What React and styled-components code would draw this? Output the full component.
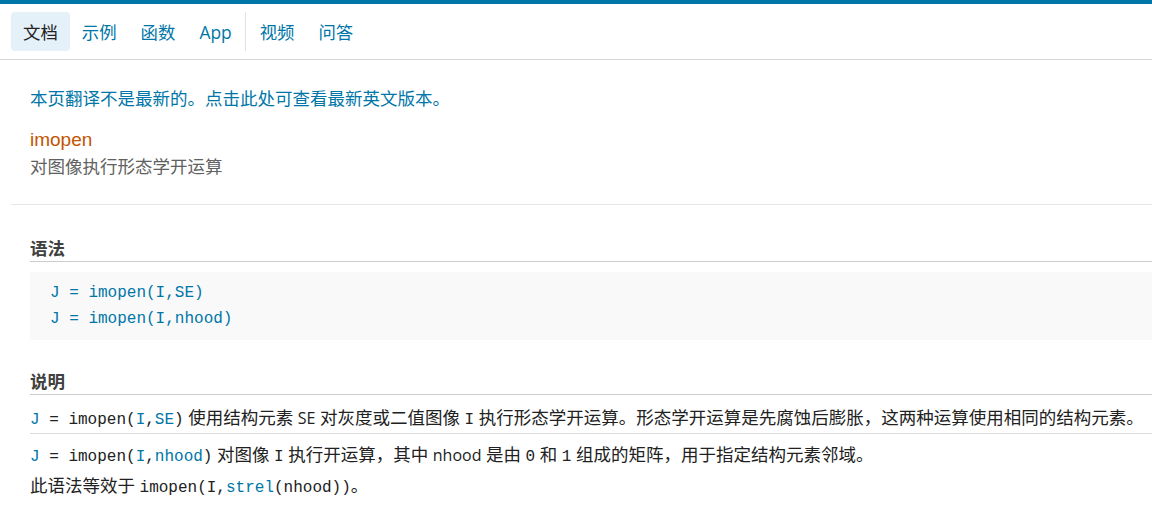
import React from "react";
import styled, { createGlobalStyle } from "styled-components";

const GlobalStyle = createGlobalStyle`
  html, body { margin: 0; padding: 0; background: #fff; }
  body {
    font-family: "Open Sans", "Noto Sans CJK SC", sans-serif;
    color: #212121;
    -webkit-font-smoothing: antialiased;
  }
`;

const BLUE = "#0076a8";
const MONO = `"Liberation Mono", "Noto Sans CJK SC", monospace`;
const BODY = `"Open Sans", "Noto Sans CJK SC", sans-serif`;

const TopBar = styled.div`
  height: 4px;
  background: ${BLUE};
`;

const Nav = styled.nav`
  display: flex;
  align-items: center;
  padding: 8px 11px;
  border-bottom: 1px solid #d6d6d6;
`;

const Tab = styled.a`
  display: block;
  height: 39px;
  line-height: 41px;
  padding: 0 12px;
  border-radius: 4px;
  font-family: ${BODY};
  font-size: 17.4px;
  text-decoration: none;
  cursor: pointer;
  color: ${(p) => (p.$active ? "#212121" : BLUE)};
  background: ${(p) => (p.$active ? "#e5f1f9" : "transparent")};
`;

const NavDivider = styled.span`
  width: 1px;
  height: 39px;
  background: #e2e2e2;
  margin: 0 2px 0 1px;
`;

const Main = styled.main`
  padding-left: 11px;
`;

const Header = styled.header`
  padding: 25px 19px 25px;
  border-bottom: 1px solid #e6e6e6;
`;

const Notice = styled.a`
  display: block;
  font-family: ${BODY};
  font-size: 17.5px;
  line-height: 26px;
  color: ${BLUE};
  text-decoration: none;
`;

const Title = styled.h1`
  margin: 16px 0 0;
  font-family: "Liberation Sans", Arial, sans-serif;
  font-weight: normal;
  font-size: 19px;
  line-height: 26px;
  color: #c45400;
`;

const Subtitle = styled.div`
  font-family: ${BODY};
  font-size: 17.5px;
  line-height: 26px;
  color: #616161;
`;

const Section = styled.section`
  margin: ${(p) => p.$top}px 0 0 19px;
`;

const SectionHeading = styled.h2`
  margin: 0;
  font-family: ${BODY};
  font-weight: bold;
  font-size: 17.5px;
  line-height: 26px;
  color: #404040;
  border-bottom: 1px solid #cccccc;
`;

const CodeBlock = styled.div`
  margin-top: 10px;
  padding: 8px 20px;
  background: #f9f9f9;
`;

const CodeLine = styled.div`
  font-family: ${MONO};
  font-size: 16px;
  line-height: 26px;
  color: ${BLUE};
  white-space: pre;
`;

const DescRow = styled.div`
  padding: ${(p) => p.$pad}px 0 0;
  font-family: ${BODY};
  font-size: 17.5px;
  line-height: 31px;
  color: #212121;
  border-bottom: ${(p) => (p.$sep ? "1px solid #dcdcdc" : "none")};
`;

const Code = styled.code`
  font-family: ${MONO};
  font-size: 16px;
  line-height: 1;
  color: ${(p) => (p.$blue ? BLUE : "#212121")};
`;

const Term = styled.span`
  font-size: 16px;
  line-height: 1;
`;

function Sig({ arg }) {
  return (
    <>
      <Code $blue>J</Code>
      <Code> = imopen(</Code>
      <Code $blue>I</Code>
      <Code>,</Code>
      <Code $blue>{arg}</Code>
      <Code>)</Code>
    </>
  );
}

export default function App() {
  const tabs = ["文档", "示例", "函数", "App"];
  const tabs2 = ["视频", "问答"];
  return (
    <>
      <GlobalStyle />
      <TopBar />
      <Nav>
        {tabs.map((t, i) => (
          <Tab key={t} $active={i === 0}>
            {t}
          </Tab>
        ))}
        <NavDivider />
        {tabs2.map((t) => (
          <Tab key={t}>{t}</Tab>
        ))}
      </Nav>
      <Main>
        <Header>
          <Notice>本页翻译不是最新的。点击此处可查看最新英文版本。</Notice>
          <Title>imopen</Title>
          <Subtitle>对图像执行形态学开运算</Subtitle>
        </Header>
        <Section $top={30}>
          <SectionHeading>语法</SectionHeading>
          <CodeBlock>
            <CodeLine>J = imopen(I,SE)</CodeLine>
            <CodeLine>J = imopen(I,nhood)</CodeLine>
          </CodeBlock>
        </Section>
        <Section $top={28}>
          <SectionHeading>说明</SectionHeading>
          <DescRow $pad={7} $sep>
            <Sig arg="SE" /> 使用结构元素 <Term>SE</Term> 对灰度或二值图像 <Code>I</Code>{" "}
            执行形态学开运算。形态学开运算是先腐蚀后膨胀，这两种运算使用相同的结构元素。
          </DescRow>
          <DescRow $pad={5}>
            <Sig arg="nhood" /> 对图像 <Code>I</Code> 执行开运算，其中 <Term>nhood</Term> 是由{" "}
            <Code>0</Code> 和 <Code>1</Code> 组成的矩阵，用于指定结构元素邻域。
            <br />
            此语法等效于 <Code>imopen(I,</Code>
            <Code $blue>strel</Code>
            <Code>(nhood))</Code>。
          </DescRow>
        </Section>
      </Main>
    </>
  );
}
